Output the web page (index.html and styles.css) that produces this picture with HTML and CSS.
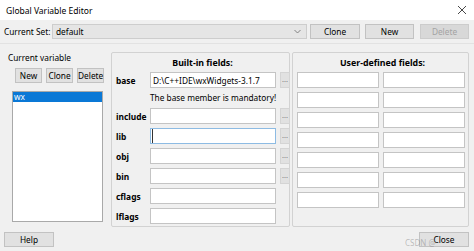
FILE: index.html
```html
<!DOCTYPE html>
<html lang="en">
<head>
    <meta charset="UTF-8">
    <title>Global Variable Editor</title>
    <link rel="stylesheet" href="styles.css">
</head>
<body>
    <div class="window">
        <div class="titlebar">
            <span>Global Variable Editor</span>
            <svg class="close-x" width="10" height="10" viewBox="0 0 10 10">
                <path d="M1 1 L9 9 M9 1 L1 9" stroke="#333" stroke-width="0.9" fill="none"/>
            </svg>
        </div>

        <div class="setbar">
            <span class="set-label">Current Set:</span>
            <div class="combo">
                <span>default</span>
                <svg width="7" height="5" viewBox="0 0 7 5">
                    <path d="M0.5 1 L3.5 4 L6.5 1" stroke="#777" stroke-width="0.9" fill="none"/>
                </svg>
            </div>
            <button class="btn btn-clone">Clone</button>
            <button class="btn btn-new">New</button>
            <button class="btn btn-delete" disabled>Delete</button>
        </div>

        <div class="main">
            <div class="vars">
                <div class="vars-title">Current variable</div>
                <div class="vars-buttons">
                    <button class="btn btn-small">New</button>
                    <button class="btn btn-small">Clone</button>
                    <button class="btn btn-small">Delete</button>
                </div>
                <div class="listbox">
                    <div class="list-item selected">wx</div>
                </div>
            </div>

            <div class="group builtin">
                <div class="group-title">Built-in fields:</div>
                <div class="fields">
                    <div class="field-row">
                        <label>base</label>
                        <input type="text" value="D:\C++IDE\wxWidgets-3.1.7">
                        <button class="dots">...</button>
                    </div>
                    <div class="note">The base member is mandatory!</div>
                    <div class="field-row">
                        <label>include</label>
                        <input type="text">
                        <button class="dots">...</button>
                    </div>
                    <div class="field-row">
                        <label>lib</label>
                        <input type="text" class="focused">
                        <button class="dots">...</button>
                    </div>
                    <div class="field-row">
                        <label>obj</label>
                        <input type="text">
                        <button class="dots">...</button>
                    </div>
                    <div class="field-row">
                        <label>bin</label>
                        <input type="text">
                        <button class="dots">...</button>
                    </div>
                    <div class="field-row">
                        <label>cflags</label>
                        <input type="text">
                    </div>
                    <div class="field-row">
                        <label>lflags</label>
                        <input type="text">
                    </div>
                </div>
            </div>

            <div class="group userdef">
                <div class="group-title">User-defined fields:</div>
                <div class="user-grid">
                    <input type="text"><input type="text">
                    <input type="text"><input type="text">
                    <input type="text"><input type="text">
                    <input type="text"><input type="text">
                    <input type="text"><input type="text">
                    <input type="text"><input type="text">
                    <input type="text"><input type="text">
                </div>
            </div>
        </div>

        <div class="footer">
            <button class="btn btn-wide">Help</button>
            <button class="btn btn-wide">Close</button>
            <span class="watermark">CSDN @</span>
        </div>
    </div>
</body>
</html>
```

FILE: styles.css
```css
body {
    margin: 0;
    background-color: #f0f0f0;
    font-family: "Noto Sans", "Liberation Sans", sans-serif;
    font-size: 8.3px;
    color: #000;
}
.window {
    width: 474px;
    height: 251px;
    position: relative;
    overflow: hidden;
}
.titlebar {
    height: 20px;
    background-color: #fff;
    display: flex;
    align-items: center;
    justify-content: space-between;
    padding: 0 7px 0 6px;
    box-sizing: border-box;
    font-size: 8.5px;
}
.setbar {
    height: 23px;
    display: flex;
    align-items: center;
    padding-left: 4px;
    border-bottom: 1px solid #e2e2e2;
    white-space: nowrap;
}
.setbar > * {
    flex-shrink: 0;
}
.set-label {
    width: 48px;
}
.combo {
    width: 255px;
    height: 15px;
    box-sizing: border-box;
    border: 1px solid #cdcdcd;
    background-color: #e5e5e5;
    display: flex;
    align-items: center;
    justify-content: space-between;
    padding: 0 5px 0 3px;
}
.btn {
    height: 15px;
    box-sizing: border-box;
    border: 1px solid #c2c2c2;
    background-color: #e1e1e1;
    font-family: inherit;
    font-size: 8.3px;
    color: #000;
    padding: 0;
    line-height: 13px;
    white-space: nowrap;
    flex-shrink: 0;
}
.btn-clone {
    width: 50px;
    margin-left: 3px;
}
.btn-new {
    width: 49px;
    margin-left: 5px;
}
.btn-delete {
    width: 49px;
    margin-left: 6px;
    background-color: #d8d8d8;
    border-color: #cccccc;
    color: #a3a3a3;
}
.main {
    display: flex;
    padding: 8px 0 0 8px;
    height: 175px;
}
.vars {
    width: 96px;
    margin-right: 7px;
    flex-shrink: 0;
}
.vars-title {
    line-height: 12px;
}
.vars-buttons {
    display: flex;
    gap: 4px;
    margin: 4px 0 0 7px;
}
.btn-small {
    width: 27px;
}
.listbox {
    margin: 8px 0 0 4px;
    width: 91px;
    height: 131px;
    box-sizing: border-box;
    border: 1px solid #a9a9a9;
    background-color: #fff;
}
.list-item {
    height: 10px;
    line-height: 10px;
    padding-left: 1px;
}
.list-item.selected {
    background-color: #0a78d6;
    color: #fff;
}
.group {
    height: 175px;
    box-sizing: border-box;
    border: 1px solid #d2d2d2;
    border-radius: 2px;
    padding-top: 4px;
    flex-shrink: 0;
}
.builtin {
    width: 179px;
    padding-left: 4px;
    margin-right: 2px;
}
.userdef {
    width: 177px;
    padding-left: 4px;
}
.group-title {
    font-weight: bold;
    font-size: 8.8px;
    line-height: 12px;
    text-align: center;
    margin-bottom: 3px;
}
.fields {
    display: flex;
    flex-direction: column;
    gap: 4px;
}
.field-row {
    display: flex;
    align-items: center;
    height: 16px;
}
.field-row label {
    width: 34px;
    flex-shrink: 0;
    font-weight: bold;
    font-size: 8.4px;
}
input {
    width: 126px;
    height: 16px;
    flex-shrink: 0;
    box-sizing: border-box;
    border: 1px solid #c4c4c4;
    background-color: #fff;
    font-family: inherit;
    font-size: 8.3px;
    padding: 0 2px;
    margin: 0;
    outline: none;
}
input.focused {
    border-color: #8dbbe3;
    box-shadow: inset 2px 0 0 -1px #fff, inset 3px 0 0 -1px #333;
}
.dots {
    width: 10px;
    height: 16px;
    flex-shrink: 0;
    margin-left: 4px;
    padding: 0;
    border: 1px solid #d4d4d4;
    background-color: #e1e1e1;
    font-size: 7px;
    line-height: 10px;
    color: #444;
}
.note {
    height: 12px;
    line-height: 12px;
    padding-left: 34px;
}
.user-grid {
    display: grid;
    grid-template-columns: 82px 82px;
    gap: 4px;
}
.user-grid input {
    width: 82px;
}
.footer {
    display: flex;
    justify-content: space-between;
    margin-top: 5px;
    padding: 0 5px 0 4px;
}
.btn-wide {
    width: 50px;
}
.watermark {
    position: absolute;
    left: 405px;
    top: 237px;
    color: rgba(120, 120, 120, 0.45);
    font-size: 8px;
}
```
